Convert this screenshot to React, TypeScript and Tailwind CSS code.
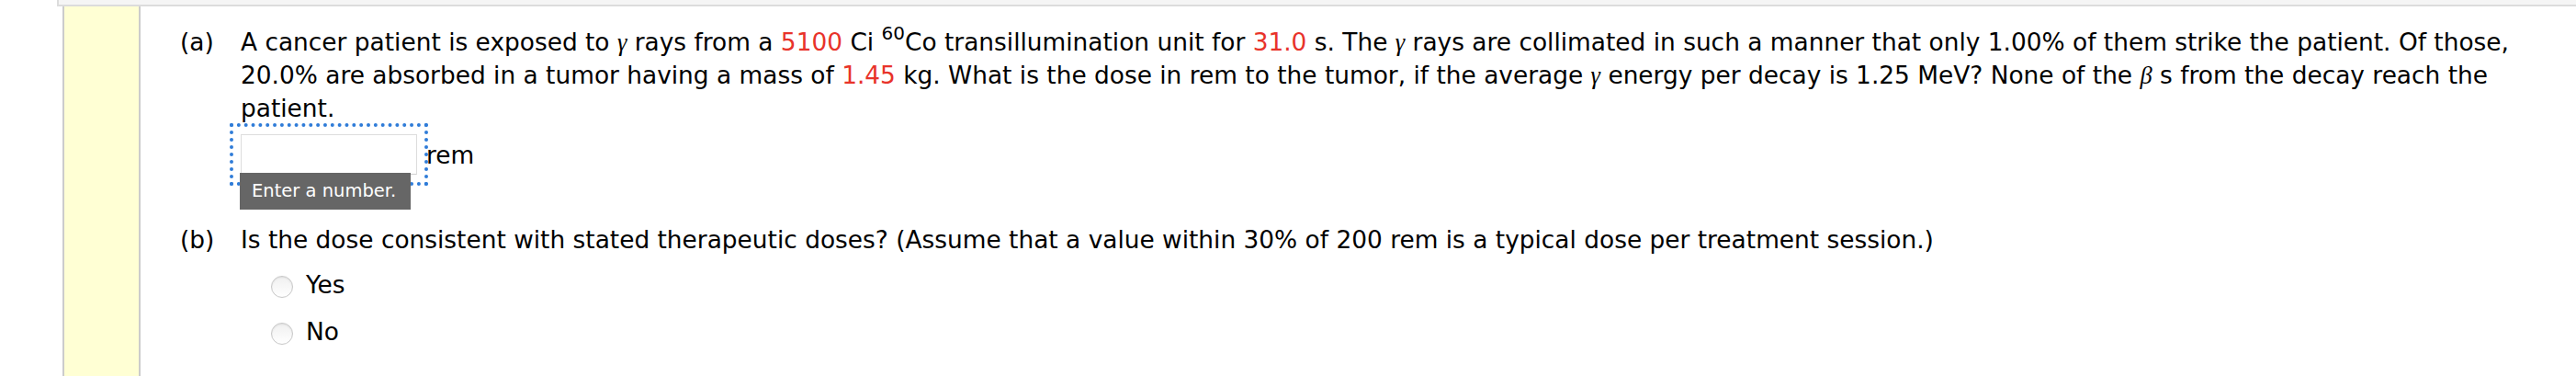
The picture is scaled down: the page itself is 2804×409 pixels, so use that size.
import React from "react";

const F = { fontFamily: '"DejaVu Sans", Verdana, sans-serif' };

function G({ c }: { c: string }) {
  return (
    <span className="italic" style={{ fontFamily: '"Liberation Serif", "DejaVu Serif", serif' }}>
      {c}
    </span>
  );
}

function Red({ children }: { children: React.ReactNode }) {
  return <span className="text-[#e8332a]">{children}</span>;
}

function Radio({ label }: { label: string }) {
  return (
    <div className="flex h-[36px] items-start">
      <span className="ml-[33px] mt-[8px] h-[24px] w-[24px] rounded-full border border-[#c8c8c8] bg-gradient-to-b from-[#f0f0f0] to-white shadow-[inset_0_1px_2px_rgba(0,0,0,0.08)]" />
      <span className="ml-[14px] leading-[36px]">{label}</span>
    </div>
  );
}

export default function App() {
  return (
    <div className="relative h-[409px] w-[2804px] overflow-hidden bg-white text-[26.4px] leading-[36px] text-black" style={F}>
      <div className="ml-[62px] h-[7px] border-b-2 border-l-2 border-[#dcdcdc] bg-[#f5f5f5]" />
      <div className="flex h-[402px]">
        <div className="ml-[68px] w-[85px] border-x-2 border-[#cccccc] bg-[#ffffd4]" />
        <div className="flex-1 pl-[43px] pt-[21px]">
          <div className="flex">
            <div className="w-[66px] shrink-0">(a)</div>
            <div className="w-[2500px]">
              <div>
                A cancer patient is exposed to <G c="γ" /> rays from a <Red>5100</Red> Ci{" "}
                <span className="relative top-[-12px] text-[20px] leading-none">60</span>Co transillumination unit for{" "}
                <Red>31.0</Red> s. The <G c="γ" /> rays are collimated in such a manner that only 1.00% of them strike the
                patient. Of those, 20.0% are absorbed in a tumor having a mass of <Red>1.45</Red> kg. What is the dose in rem
                to the tumor, if the average <G c="γ" /> energy per decay is 1.25 MeV? None of the <G c="β" /> s from the decay
                reach the patient.
              </div>
              <div className="flex items-start">
                <div className="relative mt-[10px]">
                  <div className="h-[44px] w-[192px] border border-[#dddddd] border-b-[#cfcfcf] bg-white outline-[4px] outline-offset-[8px] outline-dotted outline-[#2f7cd8]" />
                  <div className="absolute left-[-1px] top-[42px] flex h-[40px] w-[186px] items-center bg-[#666666] pl-[13px] text-[19.5px] leading-none text-white">
                    Enter a number.
                  </div>
                </div>
                <span className="ml-[10px] mt-[15px]">rem</span>
              </div>
            </div>
          </div>
          <div className="mt-[53px] flex">
            <div className="w-[66px] shrink-0">(b)</div>
            <div>
              <div>
                Is the dose consistent with stated therapeutic doses? (Assume that a value within 30% of 200 rem is a
                typical dose per treatment session.)
              </div>
              <div className="mt-[13px]">
                <Radio label="Yes" />
              </div>
              <div className="mt-[15px]">
                <Radio label="No" />
              </div>
            </div>
          </div>
        </div>
      </div>
    </div>
  );
}
